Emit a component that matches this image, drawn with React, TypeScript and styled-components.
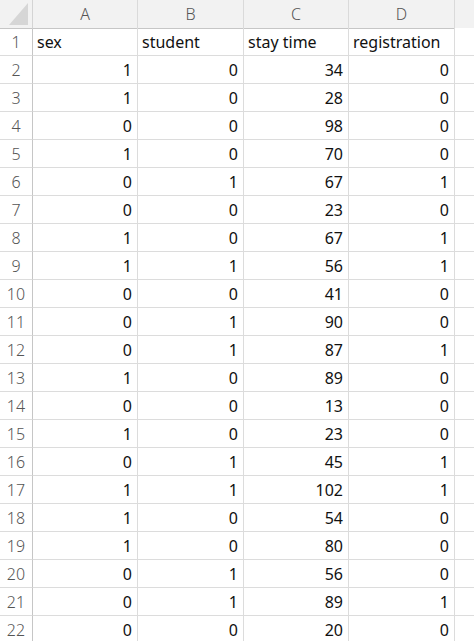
import React from 'react';
import styled, { createGlobalStyle } from 'styled-components';

const GlobalStyle = createGlobalStyle`
  html, body {
    margin: 0;
    padding: 0;
    background: #fff;
    overflow: hidden;
  }
`;

const Sheet = styled.div`
  display: grid;
  grid-template-columns: 33px 105px 106px 105px 106px 1fr;
  grid-auto-rows: 28px;
  width: 474px;
  height: 641px;
  overflow: hidden;
  font-family: "Noto Sans", "Liberation Sans", sans-serif;
  font-size: 16px;
  color: #111;
`;

const Corner = styled.div`
  position: relative;
  background: #f2f2f2;
  border-right: 1px solid #d4d4d4;
  border-bottom: 1px solid #c6c6c6;
  height: 29px;
  box-sizing: border-box;
`;

const ColHead = styled.div`
  background: #f2f2f2;
  border-right: 1px solid #dadada;
  border-bottom: 1px solid #c6c6c6;
  height: 29px;
  box-sizing: border-box;
  display: flex;
  align-items: center;
  justify-content: center;
  color: #555;
  font-weight: 300;
`;

const RowHead = styled.div`
  background: #fff;
  border-right: 1px solid #c6c6c6;
  border-bottom: 1px solid #dcdcdc;
  box-sizing: border-box;
  display: flex;
  align-items: center;
  justify-content: center;
  color: #555;
  font-weight: 300;
`;

const Cell = styled.div<{ $align?: 'left' | 'right' }>`
  border-right: 1px solid #dcdcdc;
  border-bottom: 1px solid #dcdcdc;
  box-sizing: border-box;
  display: flex;
  align-items: center;
  justify-content: ${(p) => (p.$align === 'left' ? 'flex-start' : 'flex-end')};
  padding: 0 5px 0 4px;
  white-space: nowrap;
  overflow: hidden;
`;

const Filler = styled.div<{ $head?: boolean }>`
  background: ${(p) => (p.$head ? '#f2f2f2' : '#fff')};
  border-bottom: 1px solid ${(p) => (p.$head ? '#c6c6c6' : '#dcdcdc')};
  box-sizing: border-box;
  ${(p) => (p.$head ? 'height: 29px;' : '')}
`;

const headers = ['sex', 'student', 'stay time', 'registration'];

const data: number[][] = [
  [1, 0, 34, 0],
  [1, 0, 28, 0],
  [0, 0, 98, 0],
  [1, 0, 70, 0],
  [0, 1, 67, 1],
  [0, 0, 23, 0],
  [1, 0, 67, 1],
  [1, 1, 56, 1],
  [0, 0, 41, 0],
  [0, 1, 90, 0],
  [0, 1, 87, 1],
  [1, 0, 89, 0],
  [0, 0, 13, 0],
  [1, 0, 23, 0],
  [0, 1, 45, 1],
  [1, 1, 102, 1],
  [1, 0, 54, 0],
  [1, 0, 80, 0],
  [0, 1, 56, 0],
  [0, 1, 89, 1],
  [0, 0, 20, 0],
];

const App = () => {
  return (
    <>
      <GlobalStyle />
      <Sheet>
        <Corner>
          <svg width="32" height="28" style={{ position: 'absolute', left: 0, top: 0 }}>
            <polygon points="9,25 28,25 28,3" fill="#d6d6d6" />
          </svg>
        </Corner>
        {['A', 'B', 'C', 'D'].map((c) => (
          <ColHead key={c}>{c}</ColHead>
        ))}
        <Filler $head />

        <RowHead>1</RowHead>
        {headers.map((h) => (
          <Cell key={h} $align="left">{h}</Cell>
        ))}
        <Filler />

        {data.map((row, i) => (
          <React.Fragment key={i}>
            <RowHead>{i + 2}</RowHead>
            {row.map((v, j) => (
              <Cell key={j}>{v}</Cell>
            ))}
            <Filler />
          </React.Fragment>
        ))}
      </Sheet>
    </>
  );
};

export default App;
